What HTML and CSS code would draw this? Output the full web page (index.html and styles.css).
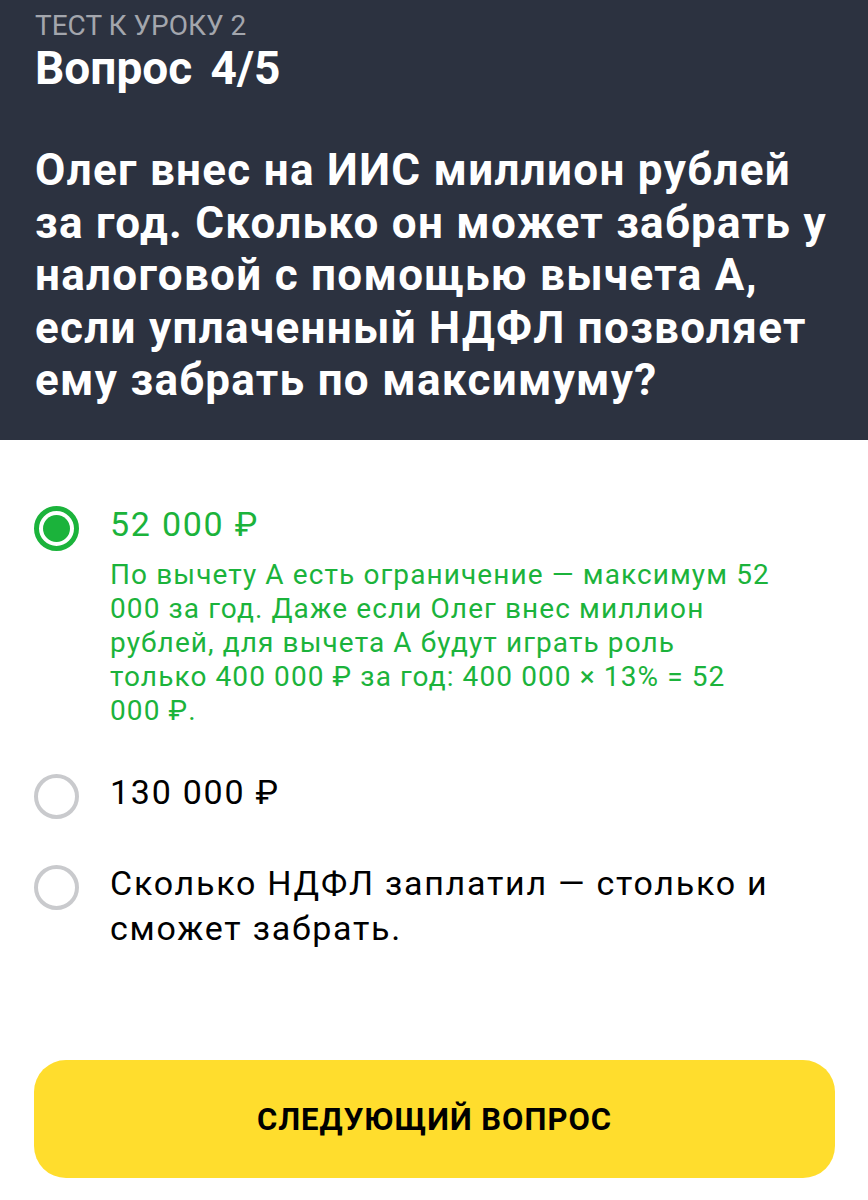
FILE: index.html
```html
<!DOCTYPE html>
<html lang="ru">
<head>
    <meta charset="UTF-8">
    <meta name="viewport" content="width=device-width, initial-scale=1.0">
    <title>Тест к уроку 2</title>
    <link rel="stylesheet" href="styles.css">
</head>
<body>

<div class="encabezado">
    <div class="subtitulo">ТЕСТ К УРОКУ 2</div>
    <div class="titulo">Вопрос 4/5</div>
    <div class="pregunta">Олег внес на ИИС миллион рублей за год. Сколько он может забрать у налоговой с помощью вычета А, если уплаченный НДФЛ позволяет ему забрать по максимуму?</div>
</div>

<div class="opciones">
    <div class="opcion correcta">
        <span class="radio marcado"></span>
        <div class="texto">
            <div class="respuesta">52 000 ₽</div>
            <div class="explicacion">По вычету А есть ограничение — максимум 52 000 за год. Даже если Олег внес миллион рублей, для вычета А будут играть роль только 400 000 ₽ за год: 400 000 × 13% = 52 000 ₽.</div>
        </div>
    </div>
    <div class="opcion">
        <span class="radio"></span>
        <div class="texto">
            <div class="respuesta">130 000 ₽</div>
        </div>
    </div>
    <div class="opcion">
        <span class="radio"></span>
        <div class="texto">
            <div class="respuesta">Сколько НДФЛ заплатил — столько и сможет забрать.</div>
        </div>
    </div>
</div>

<div class="pie">
    <button class="siguiente">СЛЕДУЮЩИЙ ВОПРОС</button>
</div>

</body>
</html>
```

FILE: styles.css
```css
body {
    font-family: 'Roboto', 'Liberation Sans', sans-serif;
    margin: 0;
    background-color: white;
    color: #000;
    width: 868px;
    height: 1200px;
    display: flex;
    flex-direction: column;
}
.encabezado {
    background-color: #2c3240;
    color: #fff;
    padding: 9px 30px 33px 35px;
}
.subtitulo {
    font-size: 28px;
    line-height: 1.2;
    color: #a3a6ad;
}
.titulo {
    font-size: 46px;
    line-height: 1.1;
    font-weight: bold;
    word-spacing: 7px;
}
.pregunta {
    font-size: 44px;
    line-height: 52.5px;
    font-weight: bold;
    letter-spacing: 1.3px;
    margin-top: 51px;
}
.opciones {
    display: flex;
    flex-direction: column;
    gap: 42px;
    padding: 62px 96px 0 34px;
}
.opcion {
    display: flex;
    align-items: flex-start;
    gap: 31px;
}
.radio {
    flex: none;
    box-sizing: border-box;
    width: 45px;
    height: 45px;
    margin-top: 4px;
    border-radius: 50%;
    border: 4px solid #c9cacd;
    position: relative;
}
.radio.marcado {
    border: 5px solid #1bb33b;
}
.radio.marcado::after {
    content: "";
    position: absolute;
    top: 4px;
    left: 4px;
    right: 4px;
    bottom: 4px;
    border-radius: 50%;
    background-color: #1bb33b;
}
.respuesta {
    font-size: 34px;
    line-height: 45px;
    letter-spacing: 1.75px;
}
.correcta .respuesta,
.correcta .explicacion {
    color: #1bb33b;
}
.explicacion {
    font-size: 28px;
    line-height: 34px;
    letter-spacing: 1.1px;
    margin-top: 11px;
}
.pie {
    margin-top: auto;
    padding: 0 33px 22px 34px;
}
button.siguiente {
    width: 100%;
    height: 118px;
    border: none;
    border-radius: 32px;
    background-color: #ffdd2d;
    color: #000;
    font-family: 'Roboto', 'Liberation Sans', sans-serif;
    font-size: 31px;
    font-weight: bold;
    letter-spacing: 1px;
    cursor: pointer;
}
```
